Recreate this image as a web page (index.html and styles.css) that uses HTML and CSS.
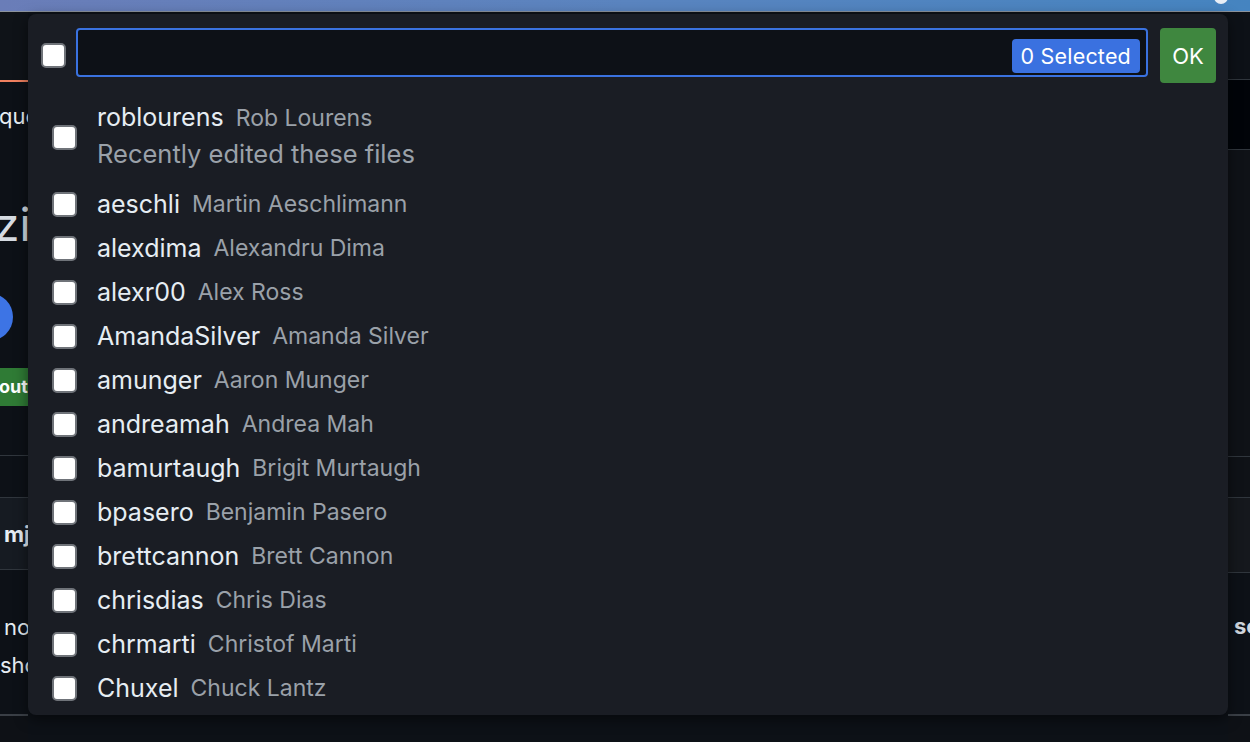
FILE: index.html
```html
<!DOCTYPE html>
<html>
<head>
<meta charset="utf-8">
<link rel="stylesheet" href="styles.css">
</head>
<body>
<div class="topbar"><span class="topicon"></span></div>
<div class="page">
  <div class="leftcol">
    <div class="l-tabs"></div>
    <div class="l-main">
      <div class="l-qu">quests</div>
      <div class="l-zi">zing</div>
      <div class="l-avatar"></div>
      <div class="l-btn">outdated</div>
    </div>
    <div class="l-sep"></div>
    <div class="l-mj">mjb</div>
    <div class="l-text">
      <div>nothing</div>
      <div class="l-sho">should</div>
    </div>
    <div class="l-foot"></div>
  </div>
  <div class="midcol"></div>
  <div class="rightcol">
    <div class="r-a"></div>
    <div class="r-b"></div>
    <div class="r-c"></div>
    <div class="r-d"></div>
    <div class="r-e"></div>
    <div class="r-f"><span class="r-sc">sc</span></div>
    <div class="r-foot"></div>
  </div>
</div>

<div class="panel">
  <div class="head">
    <span class="cb cb-head"></span>
    <div class="search">
      <span class="badge">0 Selected</span>
    </div>
    <button class="ok">OK</button>
  </div>
  <ul class="list">
    <li class="item item-two">
      <span class="cb"></span>
      <div class="texts">
        <div><span class="user">roblourens</span><span class="name">Rob Lourens</span></div>
        <div class="note">Recently edited these files</div>
      </div>
    </li>
    <li class="item"><span class="cb"></span><span class="user">aeschli</span><span class="name">Martin Aeschlimann</span></li>
    <li class="item"><span class="cb"></span><span class="user">alexdima</span><span class="name">Alexandru Dima</span></li>
    <li class="item"><span class="cb"></span><span class="user">alexr00</span><span class="name">Alex Ross</span></li>
    <li class="item"><span class="cb"></span><span class="user">AmandaSilver</span><span class="name">Amanda Silver</span></li>
    <li class="item"><span class="cb"></span><span class="user">amunger</span><span class="name">Aaron Munger</span></li>
    <li class="item"><span class="cb"></span><span class="user">andreamah</span><span class="name">Andrea Mah</span></li>
    <li class="item"><span class="cb"></span><span class="user">bamurtaugh</span><span class="name">Brigit Murtaugh</span></li>
    <li class="item"><span class="cb"></span><span class="user">bpasero</span><span class="name">Benjamin Pasero</span></li>
    <li class="item"><span class="cb"></span><span class="user">brettcannon</span><span class="name">Brett Cannon</span></li>
    <li class="item"><span class="cb"></span><span class="user">chrisdias</span><span class="name">Chris Dias</span></li>
    <li class="item"><span class="cb"></span><span class="user">chrmarti</span><span class="name">Christof Marti</span></li>
    <li class="item"><span class="cb"></span><span class="user">Chuxel</span><span class="name">Chuck Lantz</span></li>
  </ul>
</div>
</body>
</html>
```

FILE: styles.css
```css
* { box-sizing: border-box; }
html, body {
  margin: 0;
  padding: 0;
  width: 1250px;
  height: 742px;
  overflow: hidden;
  background: #0d1117;
  font-family: Inter, "Noto Sans", "Liberation Sans", sans-serif;
  color: #e6edf3;
}
.topbar {
  height: 12px;
  background: linear-gradient(90deg, #6a7db8 0%, #5a84bf 50%, #4584c0 100%);
  border-bottom: 1px solid #8c939c;
  position: relative;
  overflow: hidden;
}
.topicon {
  position: absolute;
  left: 1214px;
  top: -10px;
  width: 14px;
  height: 14px;
  border-radius: 50%;
  background: #e8eef6;
}
.page {
  display: flex;
  height: 730px;
}
.leftcol {
  width: 28px;
  overflow: hidden;
  display: flex;
  flex-direction: column;
  flex: none;
}
.l-tabs {
  height: 70px;
  background: #0f1318;
  border-bottom: 2px solid #f0805f;
  flex: none;
}
.l-main {
  height: 374px;
  border-bottom: 1px solid #30363d;
  flex: none;
}
.l-qu {
  font-size: 22px;
  white-space: nowrap;
  margin-left: -1px;
  padding-top: 21px;
  height: 50px;
}
.l-zi {
  font-size: 46px;
  white-space: nowrap;
  margin-left: -6px;
  margin-top: 64px;
  height: 56px;
  line-height: 56px;
  color: #d5dbe2;
}
.l-avatar {
  width: 48px;
  height: 48px;
  border-radius: 50%;
  background: #3d74e5;
  margin-left: -35px;
  margin-top: 41px;
}
.l-btn {
  margin-top: 27px;
  height: 38px;
  background: #2f7b35;
  color: #fff;
  font-weight: 700;
  font-size: 18px;
  line-height: 38px;
  white-space: nowrap;
  margin-left: -1px;
  width: 60px;
}
.l-sep {
  height: 42px;
  border-bottom: 1px solid #30363d;
  flex: none;
}
.l-mj {
  height: 72px;
  background: #161b22;
  border-bottom: 1px solid #30363d;
  font-weight: 700;
  font-size: 22px;
  line-height: 72px;
  padding-left: 4px;
  white-space: nowrap;
  flex: none;
}
.l-text {
  height: 146px;
  border-bottom: 2px solid #3a3f46;
  font-size: 22px;
  white-space: nowrap;
  padding-top: 38px;
  line-height: 38px;
  padding-left: 4px;
  flex: none;
}
.l-sho { margin-left: -4px; }
.l-foot, .r-foot {
  flex: 1;
  background: #0e1116;
}
.midcol { flex: 1; }
.rightcol {
  width: 22px;
  flex: none;
  display: flex;
  flex-direction: column;
  overflow: hidden;
}
.r-a { height: 68px; border-bottom: 1px solid #30363d; background: #0d1117; flex: none; }
.r-b { height: 70px; border-bottom: 1px solid #30363d; background: #010409; flex: none; }
.r-c { height: 307px; border-bottom: 1px solid #30363d; background: #0f1217; flex: none; }
.r-d { height: 41px; border-bottom: 1px solid #30363d; background: #0f1217; flex: none; }
.r-e { height: 75px; border-bottom: 1px solid #30363d; background: #15181d; flex: none; }
.r-f {
  height: 143px;
  border-bottom: 2px solid #3a3f46;
  flex: none;
  padding-top: 40px;
  padding-left: 6px;
  font-size: 22px;
  font-weight: 700;
  color: #d0d6dd;
}

.panel {
  position: absolute;
  left: 28px;
  top: 14px;
  width: 1200px;
  height: 701px;
  background: #1a1d24;
  border-radius: 8px;
  box-shadow: 0 4px 14px rgba(0,0,0,0.5);
  padding: 14px 12px 0 13px;
  overflow: hidden;
}
.head {
  display: flex;
  align-items: flex-start;
  height: 55px;
}
.cb {
  display: inline-block;
  width: 25px;
  height: 25px;
  flex: none;
  background: #ffffff;
  border: 2px solid #6f7379;
  border-radius: 5px;
}
.cb-head {
  margin-top: 15px;
  margin-right: 10px;
}
.search {
  flex: 1;
  height: 49px;
  background: #0d1117;
  border: 2px solid #3a72e0;
  border-radius: 4px;
  display: flex;
  justify-content: flex-end;
  align-items: flex-start;
  padding: 9px 6px 0 0;
}
.badge {
  background: #3a71e0;
  color: #ffffff;
  font-size: 21.5px;
  height: 34px;
  line-height: 34px;
  padding: 0 9px;
  border-radius: 4px;
  letter-spacing: 0.2px;
}
.ok {
  margin-left: 12px;
  width: 56px;
  height: 55px;
  background: #3f873f;
  color: #ffffff;
  border: none;
  border-radius: 4px;
  font-family: inherit;
  font-size: 22px;
  padding: 0;
}
.list {
  list-style: none;
  margin: 9px 0 0 0;
  padding: 0 0 0 11px;
}
.item {
  display: flex;
  align-items: center;
  height: 44px;
  white-space: nowrap;
}
.item .cb { margin-right: 20px; }
.item-two {
  height: 90px;
}
.texts {
  line-height: 37px;
  align-self: flex-start;
  margin-top: 7px;
}
.user { color: #e6edf3; margin-right: 12px; font-size: 25px; }
.name { color: #9aa1a9; font-size: 23px; }
.note { color: #9aa1a9; font-size: 25.5px; margin-top: -4px; }
```
